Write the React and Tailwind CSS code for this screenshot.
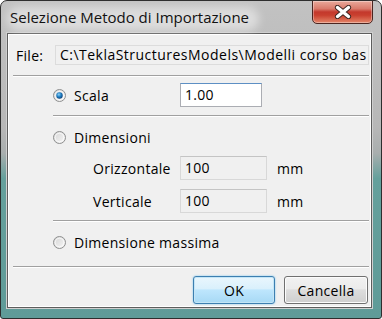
import React from "react";

function Radio({ checked }) {
  return (
    <svg width="13" height="13" viewBox="0 0 13 13" className="shrink-0">
      <defs>
        <linearGradient id="rg" x1="0" y1="0" x2="1" y2="1">
          <stop offset="0" stopColor="#d4d4d4" />
          <stop offset="1" stopColor="#f8f8f8" />
        </linearGradient>
        <radialGradient id="dot" cx="0.4" cy="0.35" r="0.7">
          <stop offset="0" stopColor="#8fd2f7" />
          <stop offset="0.5" stopColor="#1f7fc4" />
          <stop offset="1" stopColor="#0d3f76" />
        </radialGradient>
      </defs>
      <circle cx="6.5" cy="6.5" r="6" fill="url(#rg)" stroke="#8e8f8f" strokeWidth="1" />
      <circle cx="6.5" cy="6.5" r="4.3" fill="none" stroke="#ffffff" strokeOpacity="0.7" strokeWidth="1" />
      {checked && <circle cx="6.5" cy="6.5" r="3.2" fill="url(#dot)" />}
    </svg>
  );
}

function Sep({ className }) {
  return (
    <div className={"h-[2px] border-t border-[#a0a0a0] border-b border-b-white " + className} />
  );
}

export default function App() {
  const font = { fontFamily: '"Open Sans", "Noto Sans", sans-serif' };
  return (
    <div
      className="relative w-[382px] h-[319px] overflow-hidden rounded-t-[7px] rounded-b-[3px] border border-[#2e2e2e] bg-[linear-gradient(180deg,#c2c2c2_0%,#b7b7b7_40%,#a9aeae_48%,#65a09c_56%,#5f9b98_100%)] pl-[6px] pr-[9px] pb-[10px] flex flex-col text-black"
      style={font}
    >
      {/* title bar */}
      <div className="relative h-[32px] shrink-0">
        <div className="absolute left-[0px] top-[6px] w-[252px] h-[24px] rounded-[12px] bg-white/45 blur-[4px]" />
        <div className="absolute left-[3px] top-[6px] text-[15px] leading-[20px] text-[#111]">
          Selezione Metodo di Importazione
        </div>
        <div className="absolute right-[-1px] top-[-1px] w-[61px] h-[24px] rounded-b-[5px] border border-[#4b2520] bg-[linear-gradient(180deg,#e9a99b_0%,#d97b6c_35%,#c4382c_50%,#c9402f_65%,#e4876a_100%)] flex items-center justify-center shadow-[inset_0_0_0_1px_rgba(255,255,255,0.35)]">
          <svg width="20" height="14" viewBox="0 0 20 14">
            <path
              d="M4.5 2.5 L15.5 11.5 M15.5 2.5 L4.5 11.5"
              stroke="#3a2622"
              strokeWidth="5.2"
              strokeLinecap="round"
              fill="none"
            />
            <path
              d="M4.5 2.5 L15.5 11.5 M15.5 2.5 L4.5 11.5"
              stroke="#ffffff"
              strokeWidth="3.4"
              strokeLinecap="round"
              fill="none"
            />
          </svg>
        </div>
      </div>

      {/* client */}
      <div className="flex-1 border border-[#5d5d5d] bg-[#f0f0f0] shadow-[0_0_0_1px_#cfcfcf,inset_0_0_0_1px_#ffffff] pl-[5px] pr-[2px] flex flex-col text-[14px] tracking-[0.3px]">
        {/* File row */}
        <div className="mt-[11px] h-[20px] flex items-center">
          <div className="w-[42px] pl-[3px]">File:</div>
          <div className="w-[314px] h-[20px] border border-[#dcdcdc] bg-[#f0f0f0] overflow-hidden whitespace-nowrap pl-[4px] leading-[18px] tracking-[0.48px]">
            C:\TeklaStructuresModels\Modelli corso bas
          </div>
        </div>
        <Sep className="mt-[10px]" />

        {/* Scala */}
        <div className="mt-[6px] h-[24px] flex items-center pl-[40px]">
          <Radio checked />
          <div className="ml-[8px] w-[106px]">Scala</div>
          <div className="w-[82px] h-[24px] border border-[#abadb3] border-t-[#5d8fc4] bg-white pl-[4px] leading-[22px]">
            1.00
          </div>
        </div>
        <Sep className="mt-[8px] ml-[40px]" />

        {/* Dimensioni */}
        <div className="mt-[11px] h-[18px] flex items-center pl-[40px]">
          <Radio />
          <div className="ml-[8px]">Dimensioni</div>
        </div>
        <div className="mt-[10px] h-[24px] flex items-center pl-[80px]">
          <div className="w-[87px]">Orizzontale</div>
          <div className="w-[87px] h-[24px] border border-[#d8d8d8] border-t-[#c4c4c4] bg-[#f0f0f0] pl-[4px] leading-[22px]">
            100
          </div>
          <div className="ml-[10px]">mm</div>
        </div>
        <div className="mt-[9px] h-[24px] flex items-center pl-[80px]">
          <div className="w-[87px]">Verticale</div>
          <div className="w-[87px] h-[24px] border border-[#d8d8d8] border-t-[#c4c4c4] bg-[#f0f0f0] pl-[4px] leading-[22px]">
            100
          </div>
          <div className="ml-[10px]">mm</div>
        </div>
        <Sep className="mt-[7px] ml-[40px]" />

        {/* Dimensione massima */}
        <div className="mt-[11px] h-[18px] flex items-center pl-[40px]">
          <Radio />
          <div className="ml-[8px]">Dimensione massima</div>
        </div>
        <Sep className="mt-[15px]" />

        {/* Buttons */}
        <div className="mt-[8px] h-[28px] flex justify-end pr-[1px] gap-[9px]">
          <button className="w-[82px] h-[28px] rounded-[3px] border border-[#3c7fb1] bg-[linear-gradient(180deg,#eaf6fd_0%,#d9f0fc_45%,#bee6fd_50%,#a7d9f5_100%)] shadow-[inset_0_0_0_1px_#c4e5f6,0_0_2px_#6fc2ef] text-[14px]">
            OK
          </button>
          <button className="w-[84px] h-[28px] rounded-[3px] border border-[#707070] bg-[linear-gradient(180deg,#f2f2f2_0%,#ebebeb_45%,#dddddd_50%,#cfcfcf_100%)] shadow-[inset_0_0_0_1px_#fcfcfc] text-[14px]">
            Cancella
          </button>
        </div>
      </div>
    </div>
  );
}
